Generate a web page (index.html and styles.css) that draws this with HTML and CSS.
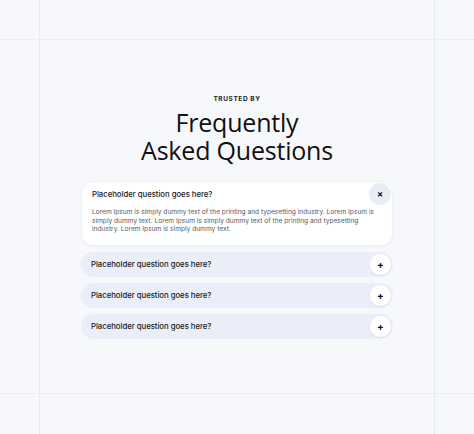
FILE: index.html
```html
<!DOCTYPE html>
<html lang="en">
<head>
<meta charset="utf-8">
<title>FAQ</title>
<link rel="stylesheet" href="styles.css">
</head>
<body>
<div class="page">
  <section class="faq">
    <p class="eyebrow">TRUSTED BY</p>
    <h1 class="title">Frequently<br>Asked Questions</h1>
    <div class="list">
      <div class="item open">
        <div class="item-head">
          <span class="q">Placeholder question goes here?</span>
          <span class="btn btn-close">&#215;</span>
        </div>
        <p class="answer">Lorem Ipsum is simply dummy text of the printing and typesetting industry. Lorem Ipsum is simply dummy text. Lorem Ipsum is simply dummy text of the printing and typesetting industry. Lorem Ipsum is simply dummy text.</p>
      </div>
      <div class="item">
        <div class="item-head">
          <span class="q">Placeholder question goes here?</span>
          <span class="btn btn-open">+</span>
        </div>
      </div>
      <div class="item">
        <div class="item-head">
          <span class="q">Placeholder question goes here?</span>
          <span class="btn btn-open">+</span>
        </div>
      </div>
      <div class="item">
        <div class="item-head">
          <span class="q">Placeholder question goes here?</span>
          <span class="btn btn-open">+</span>
        </div>
      </div>
    </div>
  </section>
</div>
</body>
</html>
```

FILE: styles.css
```css
* { box-sizing: border-box; }
html, body { margin: 0; padding: 0; }
body {
  background: #f7f8fc;
  font-family: "Inter", "Open Sans", sans-serif;
  color: #111;
  -webkit-font-smoothing: antialiased;
}
.page {
  width: 474px;
  height: 434px;
  background-color: #f7f8fc;
  background-image:
    linear-gradient(to right, transparent 39px, #e9ebf2 39px, #e9ebf2 40px, transparent 40px),
    linear-gradient(to right, transparent 434px, #e6e8ef 434px, #e6e8ef 435px, transparent 435px),
    linear-gradient(to bottom, transparent 39px, #eceef4 39px, #eceef4 40px, transparent 40px),
    linear-gradient(to bottom, transparent 393px, #eceef4 393px, #eceef4 394px, transparent 394px);
  padding-top: 95px;
}
.faq {
  width: 312px;
  margin: 0 auto;
  display: flex;
  flex-direction: column;
  align-items: center;
}
.eyebrow {
  margin: 0;
  font-size: 6.5px;
  font-weight: 700;
  letter-spacing: 0.6px;
  line-height: 8px;
  color: #222;
}
.title {
  margin: 5px 0 0;
  font-family: "Open Sans", sans-serif;
  font-weight: 400;
  font-size: 25px;
  line-height: 28px;
  text-align: center;
  color: #111;
  letter-spacing: -0.2px;
}
.list {
  width: 100%;
  margin-top: 17px;
  display: flex;
  flex-direction: column;
  gap: 6px;
}
.item {
  background: #eaeef8;
  border-radius: 13px;
  padding: 2px 2px 2px 10px;
}
.item.open {
  background: #ffffff;
  border-radius: 12px;
  border: 1px solid #eef0f5;
  padding: 0 1px 11px 10px;
  box-shadow: 0 1px 3px rgba(30, 40, 80, 0.03);
}
.item-head {
  display: flex;
  align-items: center;
  justify-content: space-between;
  height: 21px;
}
.item.open .item-head {
  height: 23px;
}
.q {
  font-size: 7.8px;
  font-weight: 500;
  letter-spacing: -0.05px;
  color: #1a1a1a;
}
.btn {
  width: 21px;
  height: 21px;
  border-radius: 50%;
  display: flex;
  align-items: center;
  justify-content: center;
  font-size: 10px;
  font-weight: 700;
  color: #111;
  line-height: 1;
}
.btn-close {
  background: #e8ecf7;
  font-size: 9px;
  width: 22px;
  height: 22px;
}
.btn-open {
  background: #ffffff;
  box-shadow: 0 1px 2px rgba(30, 40, 80, 0.06);
}
.answer {
  margin: 3px 0 0;
  max-width: 282px;
  font-size: 6.6px;
  line-height: 8.6px;
  color: #555a64;
}
```
